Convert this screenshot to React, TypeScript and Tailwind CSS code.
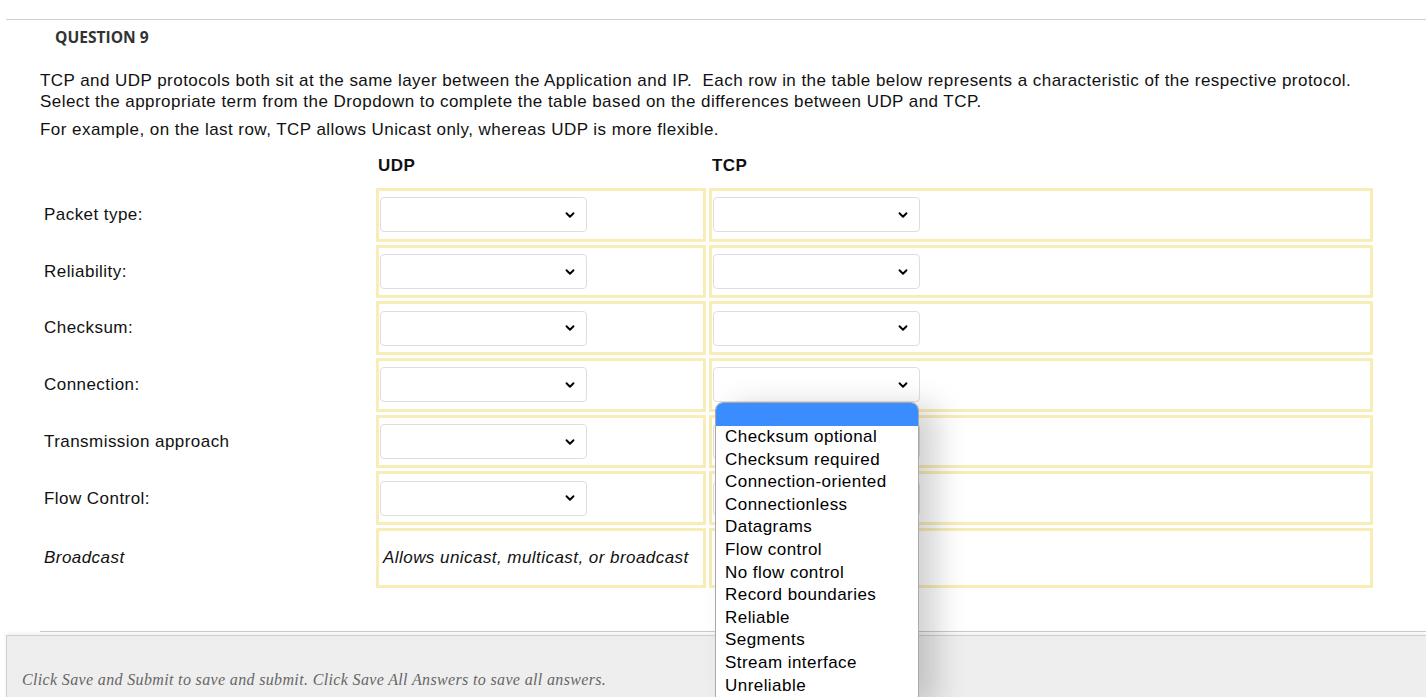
import { ChevronDown } from 'lucide-react'

const rows = [
  { label: 'Packet type:' },
  { label: 'Reliability:' },
  { label: 'Checksum:' },
  { label: 'Connection:' },
  { label: 'Transmission approach' },
  { label: 'Flow Control:' },
]

const options = [
  'Checksum optional',
  'Checksum required',
  'Connection-oriented',
  'Connectionless',
  'Datagrams',
  'Flow control',
  'No flow control',
  'Record boundaries',
  'Reliable',
  'Segments',
  'Stream interface',
  'Unreliable',
]

function FakeSelect() {
  return (
    <div className="flex h-[35px] w-[207px] items-center justify-end rounded-[4px] border border-[#dedede] bg-white pr-[9px]">
      <ChevronDown className="h-[14px] w-[14px] text-black" strokeWidth={3.2} />
    </div>
  )
}

function Cell({ children, wide }: { children?: React.ReactNode; wide?: boolean }) {
  return (
    <div
      className={`flex items-center border-[3px] border-[#f8edb7] px-[1px] ${wide ? 'w-[664px]' : 'w-[330px]'}`}
    >
      {children}
    </div>
  )
}

export default function App() {
  return (
    <div className="relative h-[697px] w-[1426px] overflow-hidden bg-white font-['Liberation_Sans',Arial,sans-serif] text-[17px] tracking-[0.45px] text-[#111]">
      <div className="ml-[6px] h-[20px] border-b border-[#cfcfcf]"></div>
      <div className="pl-[55px] pt-[7px] font-['Open_Sans',sans-serif] text-[15.6px] font-bold leading-[20px] tracking-normal text-[#333]">
        QUESTION 9
      </div>

      <div className="pl-[40px] pt-[23px]">
        <p className="leading-[21px]">
          TCP and UDP protocols both sit at the same layer between the Application and IP.&nbsp; Each row in the table below represents a characteristic of the respective protocol.
          <br />
          Select the appropriate term from the Dropdown to complete the table based on the differences between UDP and TCP.
        </p>
        <p className="mt-[7px] leading-[21px]">
          For example, on the last row, TCP allows Unicast only, whereas UDP is more flexible.
        </p>

        <div className="mt-[15px] flex h-[21px] items-center font-bold">
          <div className="w-[338px]"></div>
          <div className="w-[334px]">UDP</div>
          <div>TCP</div>
        </div>

        <div className="mt-[12px] flex flex-col gap-[3px]">
          {rows.map((r) => (
            <div key={r.label} className="flex h-[53.7px] gap-[3px]">
              <div className="flex w-[333px] items-center pl-[4px]">{r.label}</div>
              <Cell>
                <FakeSelect />
              </Cell>
              <Cell wide>
                <FakeSelect />
              </Cell>
            </div>
          ))}
          <div className="flex h-[60px] gap-[3px] italic">
            <div className="flex w-[333px] items-center pl-[4px]">Broadcast</div>
            <Cell>
              <span className="pl-[3px]">Allows unicast, multicast, or broadcast</span>
            </Cell>
            <Cell wide></Cell>
          </div>
        </div>

        <div className="mt-[43px] border-t border-[#cccccc]"></div>
      </div>

      <div className="ml-[6px] mt-[3px] h-[80px] border-l border-t border-[#cfcfcf] bg-[#eeeeee] pl-[15px] pt-[32px] font-['Liberation_Serif',Georgia,serif] text-[16px] italic tracking-[0.35px] text-[#666] shadow-[0_-2px_4px_rgba(0,0,0,0.06)]">
        Click Save and Submit to save and submit. Click Save All Answers to save all answers.
      </div>

      {/* open dropdown list */}
      <div className="absolute left-[715px] top-[402px] w-[204px] overflow-hidden rounded-[8px] border border-[#a9a9a9] bg-white pb-[6px] shadow-[18px_4px_30px_rgba(0,0,0,0.18)]">
        <div className="h-[23px] bg-[#3b8cff]"></div>
        {options.map((o) => (
          <div key={o} className="pl-[9px] text-[17px] leading-[22.6px] text-black">
            {o}
          </div>
        ))}
      </div>
    </div>
  )
}
